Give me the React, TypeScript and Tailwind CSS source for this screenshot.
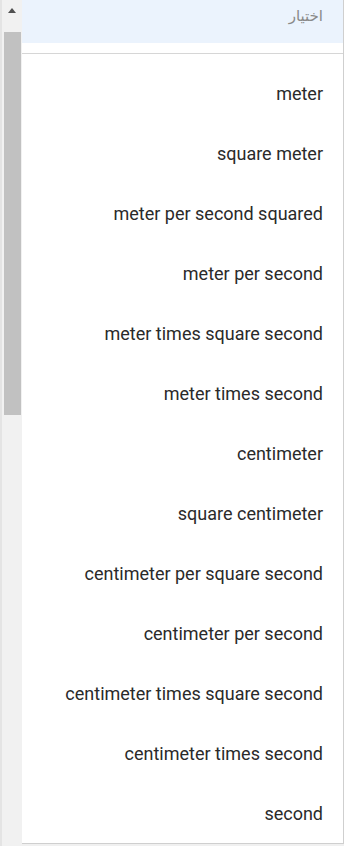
import React from 'react';

const units = [
    'meter',
    'square meter',
    'meter per second squared',
    'meter per second',
    'meter times square second',
    'meter times second',
    'centimeter',
    'square centimeter',
    'centimeter per square second',
    'centimeter per second',
    'centimeter times square second',
    'centimeter times second',
    'second',
];

export default function App() {
    return (
        <div className="w-[344px] h-[846px] bg-[#f0f0f0] flex overflow-hidden font-['Roboto','Liberation_Sans',sans-serif]">
            {/* scrollbar */}
            <div className="w-[22px] shrink-0 flex">
                <div className="w-[2px] bg-[#e4e4e4]" />
                <div className="flex-1 bg-[#f1f1f1] flex flex-col items-center">
                    <div className="h-[32px] w-full flex items-start justify-center pt-[8px]">
                        <svg width="8" height="5" viewBox="0 0 8 5">
                            <path d="M0 5 L4 0 L8 5 Z" fill="#505050" />
                        </svg>
                    </div>
                    <div className="w-[17px] h-[383px] bg-[#c1c1c1] ml-[1px]" />
                </div>
            </div>

            <div className="flex-1 flex flex-col">
                <div className="bg-white border-r border-b border-[#cfcfcf] h-[844px] flex flex-col">
                    <div className="h-[43px] shrink-0 bg-[#ebf3fd] flex justify-end pr-[20px] pt-[5px]">
                        <span
                            dir="rtl"
                            className="text-[15px] text-[#8a8a8a] font-['DejaVu_Sans',sans-serif]"
                        >
                            اختيار
                        </span>
                    </div>
                    <div className="h-[10px] shrink-0 border-b border-[#d6d6d6] box-content" />
                    <ul className="flex flex-col pt-[9px]">
                        {units.map((u) => (
                            <li
                                key={u}
                                className="h-[60px] flex items-center justify-end pr-[20px] text-[18px] text-[#2a2a2a]"
                            >
                                {u}
                            </li>
                        ))}
                    </ul>
                </div>
            </div>
        </div>
    );
}
